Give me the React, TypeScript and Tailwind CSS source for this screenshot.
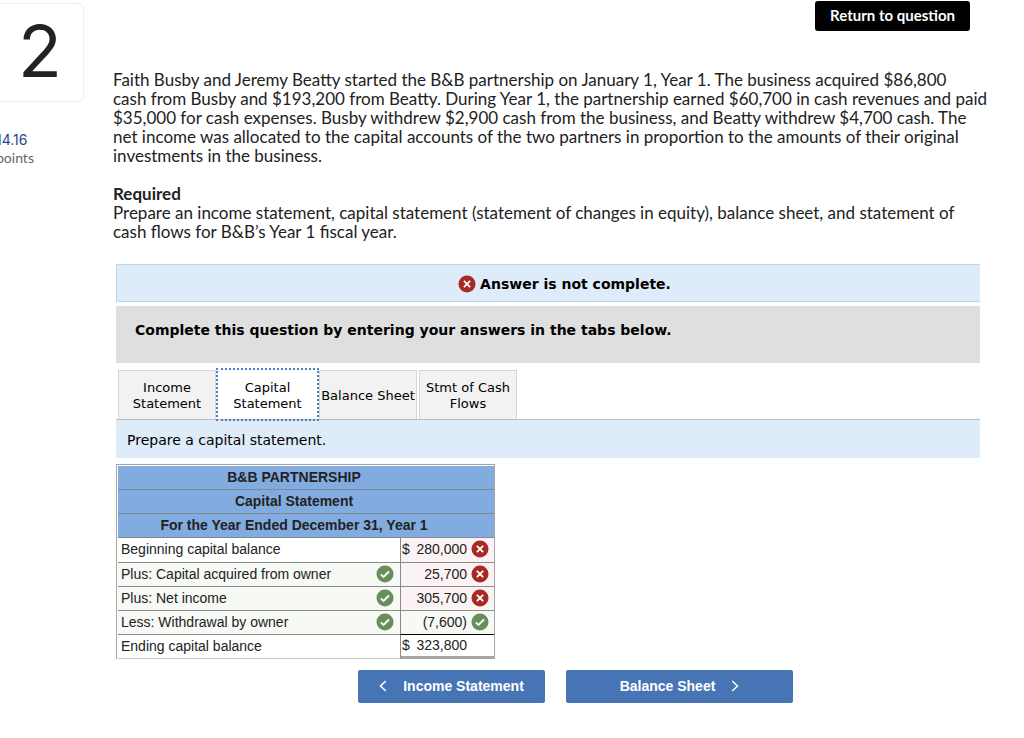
type MarkKind = "right" | "wrong";

function Mark({ kind }: { kind: MarkKind }) {
  const right = kind === "right";
  return (
    <svg
      viewBox="0 0 18 18"
      className="block size-[18px] shrink-0"
      role="img"
      aria-label={right ? "Correct" : "Incorrect"}
    >
      <circle cx="9" cy="9" r="8.5" fill={right ? "#678f5c" : "#a52a25"} />
      <path
        d={right ? "M4.8 9.3l2.7 2.6 5.5-5.4" : "M5.9 5.9l6.2 6.2M12.1 5.9l-6.2 6.2"}
        fill="none"
        stroke="#fff"
        strokeWidth="1.8"
      />
    </svg>
  );
}

type Row = {
  label: string;
  labelMark?: MarkKind;
  dollar?: boolean;
  amount: string;
  amountMark?: MarkKind;
};

const rows: Row[] = [
  { label: "Beginning capital balance", dollar: true, amount: "280,000", amountMark: "wrong" },
  { label: "Plus: Capital acquired from owner", labelMark: "right", amount: "25,700", amountMark: "wrong" },
  { label: "Plus: Net income", labelMark: "right", amount: "305,700", amountMark: "wrong" },
  { label: "Less: Withdrawal by owner", labelMark: "right", amount: "(7,600)", amountMark: "right" },
  { label: "Ending capital balance", dollar: true, amount: "323,800" },
];

const headings = ["B&B PARTNERSHIP", "Capital Statement", "For the Year Ended December 31, Year 1"];
const tabs = ["Income Statement", "Capital Statement", "Balance Sheet", "Stmt of Cash Flows"];

function amountTone(kind?: MarkKind) {
  if (kind === "wrong") return "bg-[#fbf3f3]";
  if (kind === "right") return "bg-[#f6f9f4]";
  return "bg-white";
}

function StatementTable() {
  return (
    <div className="mt-[6px] w-[379px] border border-b-0 border-[#a3a5a6] pt-px pl-px">
      <table className="w-full table-fixed border-separate border-spacing-0 font-['Liberation_Sans',Arial,sans-serif] text-sm leading-[18px] text-[#222]">
        <colgroup>
          <col />
          <col className="w-[94px]" />
        </colgroup>
        <thead>
          {headings.map((text) => (
            <tr key={text} className="h-6">
              <th colSpan={2} className="border-b border-[#7f8a97] bg-[#82abe0] pt-0 pr-6 pb-[2px] pl-0 text-center font-bold">
                {text}
              </th>
            </tr>
          ))}
        </thead>
        <tbody>
          {rows.map((row, i) => {
            const last = i === rows.length - 1;
            return (
              <tr key={row.label} className={i === 0 ? "h-[25px]" : "h-6"}>
                <th
                  scope="row"
                  className={`border-b px-0 pt-0 pb-[2px] text-left font-normal ${last ? "border-[#c4c4c4]" : "border-[#8a8c8c]"} ${row.labelMark ? "bg-[#f6f9f4]" : "bg-white"}`}
                >
                  <div className="flex items-center justify-between pr-[6px] pl-[3px]">
                    <span>{row.label}</span>
                    {row.labelMark && <Mark kind={row.labelMark} />}
                  </div>
                </th>
                <td
                  className={`border-l border-l-[#8a8c8c] px-0 pt-0 pb-[2px] ${last ? "border-b-[3px] border-b-[#a3a6a3]" : i === rows.length - 2 ? "border-b border-b-black" : "border-b border-b-[#8a8c8c]"} ${amountTone(row.amountMark)}`}
                >
                  <div className="flex items-center pr-[5px] pl-px">
                    {row.dollar && <span>$</span>}
                    <span className="mr-1 ml-auto">{row.amount}</span>
                    {row.amountMark ? <Mark kind={row.amountMark} /> : <span className="w-[18px]" />}
                  </div>
                </td>
              </tr>
            );
          })}
        </tbody>
      </table>
    </div>
  );
}

function Chevron({ back = false }: { back?: boolean }) {
  return (
    <svg viewBox="0 0 8 12" className="h-3 w-2" aria-hidden="true">
      <path d={back ? "M6.8 1L1.5 6l5.3 5" : "M1.2 1l5.3 5-5.3 5"} fill="none" stroke="#fff" strokeWidth="1.5" />
    </svg>
  );
}

export default function App() {
  return (
    <div className="flex items-start overflow-x-hidden bg-white font-[Lato,sans-serif] text-[#222] antialiased">
      <aside className="-ml-1 w-[88px] shrink-0 pt-[3px]">
        <div className="flex h-[99px] items-center justify-center rounded-md border border-[#eee] pb-1 font-[Inter,sans-serif] text-[72px] leading-none">
          2
        </div>
        <div className="pt-[29px]">
          <div className="font-[Inter,sans-serif] text-sm leading-[18px] text-[#1f4788]">14.16</div>
          <div className="text-sm leading-[17px] text-[#666]">points</div>
        </div>
      </aside>

      <main className="min-w-0 flex-1 pt-px pr-11 pl-[29px]">
        <div className="flex justify-end pr-[10px]">
          <button
            type="button"
            className="h-[30px] rounded-[3px] bg-black px-[15px] pb-[2px] text-[15px] font-bold text-white"
          >
            Return to question
          </button>
        </div>

        <div className="mt-[39px] text-[17px] leading-[19px] whitespace-nowrap">
          <p>
            Faith Busby and Jeremy Beatty started the B&amp;B partnership on January 1, Year 1. The business acquired $86,800
            <br />
            cash from Busby and $193,200 from Beatty. During Year 1, the partnership earned $60,700 in cash revenues and paid
            <br />
            $35,000 for cash expenses. Busby withdrew $2,900 cash from the business, and Beatty withdrew $4,700 cash. The
            <br />
            net income was allocated to the capital accounts of the two partners in proportion to the amounts of their original
            <br />
            investments in the business.
          </p>
          <h2 className="mt-[19px] font-bold">Required</h2>
          <p>
            Prepare an income statement, capital statement (statement of changes in equity), balance sheet, and statement of
            <br />
            cash flows for B&amp;B’s Year 1 fiscal year.
          </p>
        </div>

        <section className="mt-[23px] ml-[3px] font-['DejaVu_Sans',Verdana,sans-serif] text-black">
          <div className="flex h-[38px] items-center justify-center gap-1 border border-r-0 border-[#bfd5ea] bg-[#deebf8] pt-px pl-8 text-sm font-bold">
            <Mark kind="wrong" />
            Answer is not complete.
          </div>
          <div className="mt-1 h-[57px] bg-[#dfdfdf] px-[19px] pt-[14px] text-sm leading-5 font-bold">
            Complete this question by entering your answers in the tabs below.
          </div>

          <div className="mt-[7px] flex gap-[2px] border-b border-[#bcbfc2] pl-[2px]" role="tablist">
            {tabs.map((name) => {
              const active = name === "Capital Statement";
              return (
                <button
                  key={name}
                  type="button"
                  role="tab"
                  aria-selected={active}
                  className={
                    active
                      ? "relative h-[49px] w-[99px] bg-white pt-[2px] text-[13px] leading-4 outline-[2px] outline-[#4a7dc4] outline-dotted"
                      : "h-[49px] w-[98px] border border-b-0 border-[#d6d6d6] bg-[#f2f2f2] pt-[2px] text-[13px] leading-4"
                  }
                >
                  {name}
                </button>
              );
            })}
          </div>
          <p className="h-[38px] bg-[#deebf8] pl-[11px] text-sm leading-[40px]">Prepare a capital statement.</p>

          <StatementTable />

          <nav className="mt-[11px] flex gap-[21px] pl-[242px] font-['Liberation_Sans',Arial,sans-serif] text-sm font-bold text-white">
            <button
              type="button"
              className="flex h-[33px] w-[187px] items-center justify-center gap-4 rounded-[2px] bg-[#4774b4] pb-px"
            >
              <Chevron back />
              Income Statement
            </button>
            <button
              type="button"
              className="flex h-[33px] w-[227px] items-center justify-center gap-4 rounded-[2px] bg-[#4774b4] pb-px"
            >
              Balance Sheet
              <Chevron />
            </button>
          </nav>
        </section>
      </main>
    </div>
  );
}
